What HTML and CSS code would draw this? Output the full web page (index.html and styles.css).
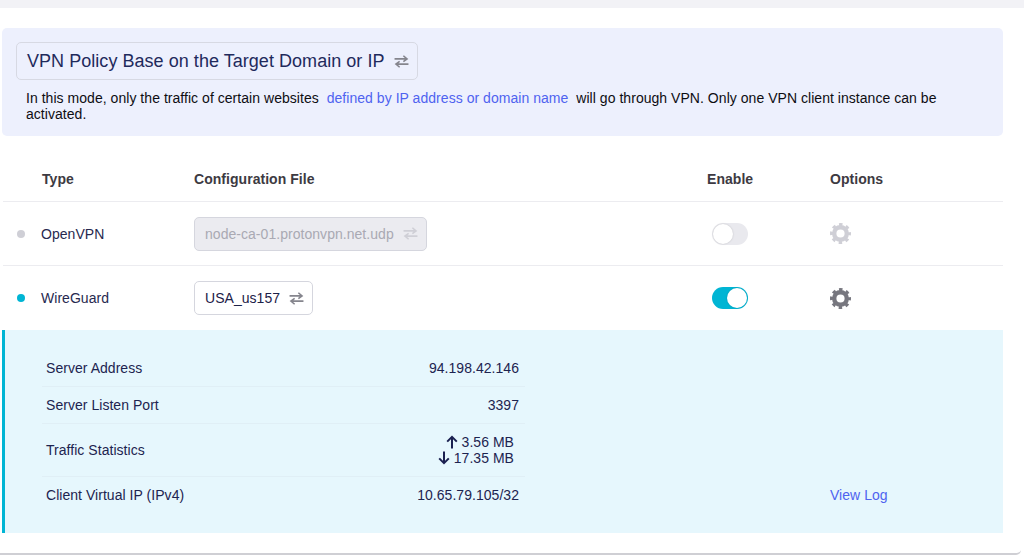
FILE: index.html
```html
<!DOCTYPE html>
<html lang="en">
<head>
<meta charset="utf-8">
<title>VPN Policy</title>
<link rel="stylesheet" href="styles.css">
</head>
<body>
<svg class="defs" width="0" height="0" aria-hidden="true">
  <defs>
    <symbol id="swap" viewBox="0 0 16 14">
      <path d="M0.5 4.2H14M10 0.8L14 4.2L10 7.2M15.5 9.8H2M6 6.8L2 9.8L6 13.2" fill="none" stroke="currentColor" stroke-width="1.7"/>
    </symbol>
    <symbol id="gear" viewBox="0 0 22 22">
      <circle cx="11" cy="11" r="6.6" fill="none" stroke="currentColor" stroke-width="4.6"/>
      <circle cx="11" cy="11" r="9.4" fill="none" stroke="currentColor" stroke-width="3.2" stroke-dasharray="3.6 3.78" stroke-dashoffset="1.8"/>
    </symbol>
    <symbol id="arrow-up" viewBox="0 0 12 14">
      <path d="M6 13.5V1.8M1.2 6.6L6 1.8L10.8 6.6" fill="none" stroke="currentColor" stroke-width="2"/>
    </symbol>
    <symbol id="arrow-down" viewBox="0 0 12 14">
      <path d="M6 .5V12.2M1.2 7.4L6 12.2L10.8 7.4" fill="none" stroke="currentColor" stroke-width="2"/>
    </symbol>
  </defs>
</svg>
<div class="top-strip"></div>
<main class="card">
  <section class="banner">
    <div class="policy-select">
      <span>VPN Policy Base on the Target Domain or IP</span>
      <svg class="swap-lg"><use href="#swap"/></svg>
    </div>
    <p class="desc">In this mode, only the traffic of certain websites <a class="link link-gap" href="#">defined by IP address or domain name</a> will go through VPN. Only one VPN client instance can be activated.</p>
  </section>

  <div class="table">
    <div class="row head">
      <div class="c-status"></div>
      <div class="c-type">Type</div>
      <div class="c-file">Configuration File</div>
      <div class="c-enable">Enable</div>
      <div class="c-options">Options</div>
    </div>
    <div class="row">
      <div class="c-status"><span class="dot"></span></div>
      <div class="c-type">OpenVPN</div>
      <div class="c-file">
        <div class="file-select disabled"><span>node-ca-01.protonvpn.net.udp</span><svg class="swap-sm"><use href="#swap"/></svg></div>
      </div>
      <div class="c-enable"><span class="toggle"><span class="knob"></span></span></div>
      <div class="c-options"><svg class="gear muted"><use href="#gear"/></svg></div>
    </div>
    <div class="row last">
      <div class="c-status"><span class="dot on"></span></div>
      <div class="c-type">WireGuard</div>
      <div class="c-file">
        <div class="file-select"><span>USA_us157</span><svg class="swap-sm"><use href="#swap"/></svg></div>
      </div>
      <div class="c-enable"><span class="toggle on"><span class="knob"></span></span></div>
      <div class="c-options"><svg class="gear"><use href="#gear"/></svg></div>
    </div>
  </div>

  <section class="panel">
    <div class="details">
      <div class="detail"><span>Server Address</span><span>94.198.42.146</span></div>
      <div class="detail"><span>Server Listen Port</span><span>3397</span></div>
      <div class="detail traffic">
        <span>Traffic Statistics</span>
        <div class="stats">
          <div class="stat"><svg class="arrow"><use href="#arrow-up"/></svg>3.56 MB</div>
          <div class="stat"><svg class="arrow"><use href="#arrow-down"/></svg>17.35 MB</div>
        </div>
      </div>
      <div class="detail"><span>Client Virtual IP (IPv4)</span><span>10.65.79.105/32</span></div>
    </div>
    <a class="link view-log" href="#">View Log</a>
  </section>
</main>
</body>
</html>
```
FILE: styles.css
```css
* { box-sizing: border-box; }
html, body { height: 555px; overflow: hidden; }
body {
  margin: 0;
  background: #fff;
  color: #1d2450;
  font: 14px/16px "Liberation Sans", Arial, sans-serif;
  letter-spacing: .04px;
}
.defs { display: block; height: 0; }
.top-strip { height: 8px; background: #f2f2f6; }
.card {
  width: 1021px;
  height: 547px;
  padding: 20px 18px 0 2px;
  background: #fff;
  border-bottom: 2px solid #cfcfd4;
  border-bottom-right-radius: 5px;
  display: flex;
  flex-direction: column;
}
.banner {
  height: 108px;
  padding: 14px 14px 0;
  background: #edf0fd;
  border-radius: 5px;
}
.policy-select {
  display: inline-flex;
  align-items: center;
  gap: 9px;
  height: 38px;
  padding: 0 8px 0 10px;
  border: 1px solid #d7d9e3;
  border-radius: 5px;
  font-size: 18px;
  color: #1f2a5c;
}
.swap-lg { width: 15px; height: 13px; color: #85858d; }
.desc { margin: 10px 0 0 10px; color: #0d0d12; max-width: 930px; }
.link { color: #4f63f0; text-decoration: none; }
.link-gap { margin: 0 4px; }

.table { margin: 20px 0 0 1px; }
.row {
  display: flex;
  align-items: center;
  height: 64px;
  border-bottom: 1px solid #ececf0;
  color: #27294f;
}
.row.last { height: 64px; border-bottom: 0; }
.row.head {
  height: 46px;
  font-weight: bold;
  color: #3d3a42;
}
.c-status { width: 38px; padding-left: 14px; display: flex; }
.c-type { width: 153px; }
.head .c-status { width: 39px; }
.head .c-type { width: 152px; }
.c-file { width: 513px; display: flex; }
.c-enable { width: 123px; display: flex; }
.row:not(.head) .c-enable { padding-left: 5px; }
.c-options { display: flex; }
.dot { width: 8px; height: 8px; border-radius: 50%; background: #cfcfd6; }
.dot.on { background: #00b5d4; }
.file-select {
  display: flex;
  align-items: center;
  gap: 9px;
  height: 34px;
  padding: 0 8px 0 10px;
  border: 1px solid #d5d6de;
  border-radius: 5px;
  color: #1c2148;
  background: #fff;
}
.file-select.disabled { background: #ebebf0; color: #a9a9b3; }
.swap-sm { width: 15px; height: 13px; color: #85858d; }
.disabled .swap-sm { color: #cfcfd6; }
.toggle {
  width: 36px;
  height: 22px;
  padding: 1px;
  border-radius: 11px;
  background: #e9e9ee;
  display: flex;
}
.toggle.on { background: #00b5d4; justify-content: flex-end; }
.knob {
  width: 20px;
  height: 20px;
  border-radius: 50%;
  background: #fff;
  box-shadow: 0 0 2px rgba(0, 0, 0, .18);
}
.gear { width: 21px; height: 21px; color: #77777f; }
.gear.muted { color: #cfcfd6; }

.panel {
  display: flex;
  height: 203px;
  padding: 20px 0 0 37px;
  background: #e6f7fd;
  border-left: 3px solid #00b5d4;
}
.details { width: 483px; }
.detail {
  display: flex;
  align-items: center;
  justify-content: space-between;
  height: 37px;
  padding: 0 6px 0 4px;
  border-bottom: 1px solid #e0eff6;
}
.detail:last-child { border-bottom: 0; height: 36px; }
.detail.traffic { height: 53px; }
.stats { padding-right: 5px; text-align: right; }
.stat { display: flex; align-items: center; justify-content: flex-end; gap: 4px; }
.arrow { width: 12px; height: 14px; color: #1a2050; }
.view-log {
  align-self: flex-end;
  margin: 0 0 30px 305px;
}
```
